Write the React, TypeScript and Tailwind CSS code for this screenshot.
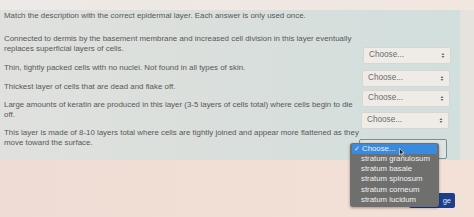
import React from "react";

const font = { fontFamily: '"Liberation Sans", Arial, sans-serif' };

function Select({ className = "" }: { className?: string }) {
  return (
    <div
      className={`flex h-[17px] w-[88px] items-center justify-between rounded-[2px] border border-[#d9d6d2] bg-[#efece8] pl-[5px] pr-[5px] text-[8.2px] text-[#6b6b6b] ${className}`}
    >
      <span>Choose...</span>
      <svg width="4" height="7" viewBox="0 0 4 7">
        <path d="M0.5 3 L2 1 L3.5 3 Z" fill="#6a6a6a" />
        <path d="M0.5 4 L2 6 L3.5 4 Z" fill="#6a6a6a" />
      </svg>
    </div>
  );
}

export default function App() {
  const lines = [
    { t: ["Connected to dermis by the basement membrane and increased cell division in this layer eventually", "replaces superficial layers of cells."], mt: "mt-[13px]" },
    { t: ["Thin, tightly packed cells with no nuclei. Not found in all types of skin."], mt: "mt-[9px]" },
    { t: ["Thickest layer of cells that are dead and flake off."], mt: "mt-[9px]" },
    { t: ["Large amounts of keratin are produced in this layer (3-5 layers of cells total) where cells begin to die", "off."], mt: "mt-[8px]" },
    { t: ["This layer is made of 8-10 layers total where cells are tightly joined and appear more flattened as they", "move toward the surface."], mt: "mt-[8px]" },
  ];
  return (
    <div className="relative h-[217px] w-[474px] overflow-hidden bg-[#efe4df]" style={font}>
      <div className="h-[10px] bg-gradient-to-r from-[#ece9e6] to-[#f2e6e0]" />
      <div className="flex">
        <div className="flex h-[150px] w-[460px] bg-gradient-to-r from-[#e0e1de] via-[#d9dfdc] to-[#d1dfdd]">
          <div className="w-[358px] pl-[4px] pt-[1px] text-[7.9px] leading-[10px] text-[#585858]">
            <div className="whitespace-nowrap">Match the description with the correct epidermal layer. Each answer is only used once.</div>
            {lines.map((l, i) => (
              <div key={i} className={l.mt}>
                {l.t.map((s, j) => (
                  <div key={j} className="whitespace-nowrap">{s}</div>
                ))}
              </div>
            ))}
          </div>
          <div className="flex flex-col pt-[37px]">
            <Select className="ml-[5px]" />
            <Select className="ml-[4px] mt-[6px]" />
            <Select className="ml-[4px] mt-[3px]" />
            <Select className="ml-[3px] mt-[5px]" />
            <div className="ml-[1px] mt-[10px] h-[20px] w-[88px] rounded-[2px] border-[1.5px] border-[#7a8c94] bg-[#dfe3e2]" />
          </div>
        </div>
        <div className="h-[150px] flex-1 bg-[#e6e3df]" />
      </div>
      <div className="h-[57px] bg-gradient-to-r from-[#efdcd4] to-[#f3e0d6]">
        <div className="flex justify-end pr-[19px] pt-[33px]">
          <div className="flex h-[15px] w-[46px] items-center justify-end rounded-[2px] bg-[#1d3f8a] pr-[4px] text-[7.5px] text-[#dfe6f2]">
            ge
          </div>
        </div>
      </div>

      {/* open dropdown menu */}
      <div className="absolute left-[350px] top-[143px] w-[89px] rounded-[3px] bg-[#6f6f6e] pb-[2px] pt-[1px] text-[7.8px] leading-[10.2px] text-[#f0f0f0] shadow-[0_1px_3px_rgba(0,0,0,0.35)]">
        <div className="mx-[2px] flex h-[10px] items-center rounded-[1px] bg-[#3a8ae0] pl-[2px]">
          <span className="mr-[2px] text-[7px]">✓</span>
          <span>Choose...</span>
        </div>
        <div className="pl-[11px]">
          <div>stratum granulosum</div>
          <div>stratum basale</div>
          <div>stratum spinosum</div>
          <div>stratum corneum</div>
          <div>stratum lucidum</div>
        </div>
      </div>
      {/* cursor */}
      <svg className="absolute left-[399px] top-[148px]" width="6" height="9" viewBox="0 0 6 9">
        <path d="M0.5 0.5 L0.5 7 L2 5.5 L3.3 8.3 L4.3 7.8 L3 5 L5.2 5 Z" fill="#222" stroke="#fff" strokeWidth="0.6" />
      </svg>
    </div>
  );
}
